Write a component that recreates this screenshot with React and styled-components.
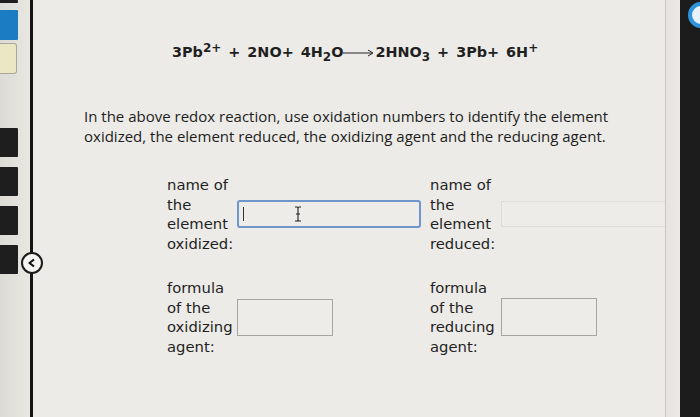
import React from "react";
import styled, { createGlobalStyle } from "styled-components";

const GlobalStyle = createGlobalStyle`
  html, body {
    margin: 0;
    padding: 0;
    background: #eceae6;
  }
  * {
    box-sizing: border-box;
  }
`;

const Page = styled.div`
  position: relative;
  display: flex;
  width: 700px;
  height: 417px;
  overflow: hidden;
  background: #eceae6;
`;

const Rail = styled.div`
  width: 30px;
  flex-shrink: 0;
  display: flex;
  flex-direction: column;
  background: linear-gradient(to right, #dcdbd6 0, #e3e2dd 18px, #e8e7e2 30px);
  .tiles-top {
    display: flex;
    flex-direction: column;
    gap: 3px;
  }
  .tiles-bottom {
    margin-top: 54px;
    display: flex;
    flex-direction: column;
    gap: 10px;
  }
`;

const Tile = styled.div`
  width: ${(p) => p.$w || 18}px;
  height: ${(p) => p.$h || 29}px;
  margin-top: ${(p) => p.$mt || 0}px;
  background: ${(p) => p.$bg};
  border: ${(p) => (p.$border ? "1px solid #a9a79a" : "none")};
  border-left: none;
  border-radius: ${(p) => (p.$border ? "0 3px 3px 0" : "0 1px 1px 0")};
`;

const Divider = styled.div`
  width: 3px;
  flex-shrink: 0;
  background: #141414;
`;

const Main = styled.main`
  flex: 1;
  min-width: 0;
  overflow: hidden;
  background: #ecebe7;
  color: #1f1f1f;
  padding-top: 44px;
`;

const Equation = styled.div`
  margin-left: 139px;
  font-family: "DejaVu Sans", Verdana, sans-serif;
  font-weight: bold;
  font-size: 14.4px;
  line-height: 16px;
  word-spacing: 2px;
  white-space: nowrap;
  display: flex;
  align-items: center;
  sup {
    font-size: 12px;
    position: relative;
    top: 1px;
    vertical-align: super;
    line-height: 0;
  }
  sub {
    font-size: 12px;
    vertical-align: sub;
    line-height: 0;
  }
  svg {
    display: block;
    margin: 2px 1px 0 0;
  }
`;

const Prompt = styled.p`
  margin: 46px 0 0 51px;
  font-family: "Open Sans", sans-serif;
  font-size: 15px;
  line-height: 20px;
  color: #1d1d1d;
  white-space: nowrap;
`;

const AnswerGrid = styled.div`
  margin: 29px 0 0 134px;
  display: grid;
  grid-template-columns: 263px 1fr;
  row-gap: 25px;
`;

const Cell = styled.div`
  display: flex;
  align-items: center;
  gap: 2px;
`;

const Label = styled.div`
  width: 68px;
  flex-shrink: 0;
  font-family: "DejaVu Sans", Verdana, sans-serif;
  font-size: 14.8px;
  line-height: 19.5px;
  color: #1f1f1f;
`;

const Field = styled.div`
  position: relative;
  flex-shrink: 0;
  width: ${(p) => p.$w}px;
  height: ${(p) => p.$h}px;
  margin-left: ${(p) => p.$ml || 0}px;
  background: #edece8;
  border: ${(p) =>
    p.$focused
      ? "2px solid #6f95cd"
      : p.$faint
      ? "1px solid #dedcd7"
      : "1px solid #a6a5a2"};
  border-radius: ${(p) => (p.$focused ? "3px" : "0")};
  display: flex;
  align-items: center;
  padding-left: 4px;
`;

const Caret = styled.span`
  width: 1px;
  height: 14px;
  background: #333;
`;

const Pointer = styled.svg`
  position: absolute;
  left: 54px;
  top: 4px;
`;

const Toggle = styled.div`
  position: absolute;
  left: 21px;
  top: 252px;
  width: 22px;
  height: 22px;
  border-radius: 50%;
  background: #f4f4f2;
  border: 2px solid #1a1a1a;
  display: flex;
  align-items: center;
  justify-content: center;
`;

const EdgeLine = styled.div`
  width: 1px;
  flex-shrink: 0;
  background: #c9c7c2;
`;

const LightStrip = styled.div`
  width: 14px;
  flex-shrink: 0;
  background: linear-gradient(to right, #e6e3e1, #ece9e6);
`;

const DarkStrip = styled.div`
  width: 20px;
  flex-shrink: 0;
  background: #1c1c1d;
  overflow: hidden;
  padding-top: 2px;
  .badge {
    margin-left: 8px;
    width: 26px;
    height: 26px;
    border-radius: 50%;
    border: 4px solid #2f93dc;
    background: #e8f1f8;
  }
`;

function App() {
  return (
    <>
      <GlobalStyle />
      <Page>
        <Rail>
          <div className="tiles-top">
            <Tile $h={3} $bg="#1e1e1e" />
            <Tile $h={30} $mt={4} $bg="#1b7cc3" />
            <Tile $h={31} $w={17} $bg="#ebe6c4" $border />
          </div>
          <div className="tiles-bottom">
            <Tile $bg="#1f1e1e" />
            <Tile $bg="#1f1e1e" />
            <Tile $bg="#1f1e1e" />
            <Tile $bg="#1f1e1e" />
          </div>
        </Rail>
        <Divider />
        <Main>
          <Equation>
            <span>
              3Pb<sup>2+</sup> + 2NO+ 4H<sub>2</sub>O
            </span>
            <svg width="31" height="8" viewBox="0 0 31 8">
              <line x1="0" y1="4" x2="29" y2="4" stroke="#222" strokeWidth="1" />
              <path d="M25 1 L30 4 L25 7" fill="none" stroke="#222" strokeWidth="1" />
            </svg>
            <span>
              2HNO<sub>3</sub> + 3Pb+ 6H<sup>+</sup>
            </span>
          </Equation>
          <Prompt>
            In the above redox reaction, use oxidation numbers to identify the element
            <br />
            oxidized, the element reduced, the oxidizing agent and the reducing agent.
          </Prompt>
          <AnswerGrid>
            <Cell>
              <Label>
                name of
                <br />
                the
                <br />
                element
                <br />
                oxidized:
              </Label>
              <Field $w={184} $h={28} $focused>
                <Caret />
                <Pointer width="10" height="16" viewBox="0 0 10 16">
                  <path
                    d="M2 1 H4 Q5 1 5 2.5 Q5 1 6 1 H8 M5 2.5 V13.5 M2 15 H4 Q5 15 5 13.5 Q5 15 6 15 H8 M3 8 H7"
                    fill="none"
                    stroke="#222"
                    strokeWidth="1.1"
                  />
                </Pointer>
              </Field>
            </Cell>
            <Cell>
              <Label>
                name of
                <br />
                the
                <br />
                element
                <br />
                reduced:
              </Label>
              <Field $w={184} $h={26} $ml={1} $faint />
            </Cell>
            <Cell>
              <Label>
                formula
                <br />
                of the
                <br />
                oxidizing
                <br />
                agent:
              </Label>
              <Field $w={96} $h={37} />
            </Cell>
            <Cell>
              <Label>
                formula
                <br />
                of the
                <br />
                reducing
                <br />
                agent:
              </Label>
              <Field $w={96} $h={38} $ml={1} />
            </Cell>
          </AnswerGrid>
        </Main>
        <EdgeLine />
        <LightStrip />
        <DarkStrip>
          <div className="badge" />
        </DarkStrip>
        <Toggle>
          <svg width="10" height="10" viewBox="0 0 10 10">
            <path d="M7 1.5 L2.5 5 L7 8.5" fill="none" stroke="#111" strokeWidth="2.2" strokeLinejoin="round" />
          </svg>
        </Toggle>
      </Page>
    </>
  );
}

export default App;
